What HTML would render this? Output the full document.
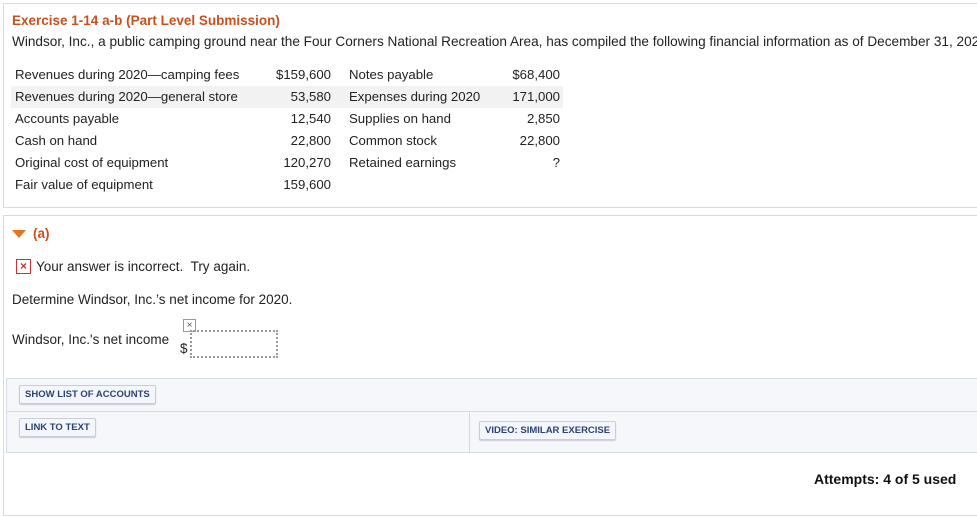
<!DOCTYPE html>
<html><head><style>
body{margin:0;width:977px;height:517px;background:#fff;font-family:"Liberation Sans",Arial,sans-serif;font-size:13.5px;color:#222;position:relative;overflow:hidden}
.a{position:absolute;white-space:nowrap}
.panel{position:absolute;border:1px solid #d5dbe3;background:#fff}
.r{text-align:right}
.t{font-size:13.2px}
.btn{position:absolute;font-size:9.5px;font-weight:bold;color:#2d4373;background:#f3f6fa;border:1px solid #c8ced8;border-radius:2px;padding:3px 5px;box-shadow:0 1px 1px #ccd}
</style></head><body>
<div class="panel" style="left:3px;top:3px;width:990px;height:203px"></div>
<div class="a" style="left:12px;top:13px;color:#c8501e;font-weight:bold;font-size:13.5px">Exercise 1-14 a-b (Part Level Submission)</div>
<div class="a" style="left:12px;top:34px;font-size:13.6px">Windsor, Inc., a public camping ground near the Four Corners National Recreation Area, has compiled the following financial information as of December 31, 2020.</div>
<div class="a" style="left:11px;top:86px;width:552px;height:22px;background:#f2f2f2"></div>
<div class="a t" style="left:15px;top:64px;line-height:22px">Revenues during 2020—camping fees<br>Revenues during 2020—general store<br>Accounts payable<br>Cash on hand<br>Original cost of equipment<br>Fair value of equipment</div>
<div class="a r t" style="left:250px;width:81px;top:64px;line-height:22px">$159,600<br>53,580<br>12,540<br>22,800<br>120,270<br>159,600</div>
<div class="a t" style="left:349px;top:64px;line-height:22px">Notes payable<br>Expenses during 2020<br>Supplies on hand<br>Common stock<br>Retained earnings</div>
<div class="a r t" style="left:480px;width:80px;top:64px;line-height:22px">$68,400<br>171,000<br>2,850<br>22,800<br>?</div>

<div class="panel" style="left:3px;top:215px;width:990px;height:299px"></div>
<div class="a" style="left:12px;top:230px;width:0;height:0;border-left:7px solid transparent;border-right:7px solid transparent;border-top:8px solid #e8731f"></div>
<div class="a" style="left:33px;top:226px;color:#c8501e;font-weight:bold">(a)</div>
<div class="a" style="left:16px;top:259px;width:13px;height:13px;border:1px solid #c33;color:#c33;font-size:12px;line-height:13px;text-align:center;font-weight:bold">×</div>
<div class="a" style="left:36px;top:259px">Your answer is incorrect.&nbsp; Try again.</div>
<div class="a" style="left:12px;top:292px">Determine Windsor, Inc.’s net income for 2020.</div>
<div class="a" style="left:12px;top:332px">Windsor, Inc.'s net income</div>
<div class="a" style="left:183px;top:319px;width:11px;height:11px;border:1px solid #999;font-size:10px;line-height:11px;text-align:center;color:#555">×</div>
<div class="a" style="left:180px;top:341px">$</div>
<div class="a" style="left:190px;top:330px;width:84px;height:24px;border:2px dotted #999"></div>

<div class="a" style="left:6px;top:378px;width:980px;height:73px;background:#f5f7fa;border:1px solid #d5dbe3"></div>
<div class="a" style="left:6px;top:411px;width:980px;height:1px;background:#d5dbe3"></div>
<div class="a" style="left:469px;top:411px;width:1px;height:41px;background:#d5dbe3"></div>
<div class="btn" style="left:19px;top:385px">SHOW LIST OF ACCOUNTS</div>
<div class="btn" style="left:19px;top:418px">LINK TO TEXT</div>
<div class="btn" style="left:479px;top:421px">VIDEO: SIMILAR EXERCISE</div>
<div class="a" style="left:814px;top:471px;font-weight:bold;color:#111;font-size:14px">Attempts: 4 of 5 used</div>
</body></html>
